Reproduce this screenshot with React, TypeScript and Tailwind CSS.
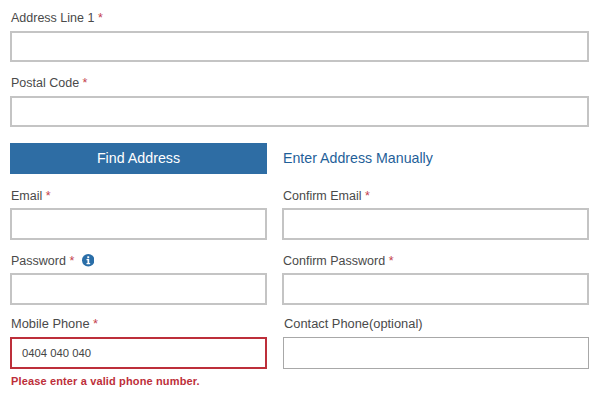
import React from "react";

const font = "font-['Liberation_Sans',Arial,sans-serif]";

function Label({ text, req = true, info = false, large = false }: { text: string; req?: boolean; info?: boolean; large?: boolean }) {
  return (
    <div className={`h-[21px] pl-[1px] flex items-center leading-[21px] text-[#4a4a4a] ${large ? "text-[12.85px]" : "text-[12.5px]"}`}>
      <span>{text}</span>
      {req && <span className="ml-[3.5px] text-[#c4404a]">*</span>}
      {info && (
        <svg className="ml-[7.5px] -mt-[2px]" width="12.5" height="12.5" viewBox="0 0 13 13">
          <circle cx="6.5" cy="6.5" r="6.5" fill="#2a6ea8" />
          <rect x="5.5" y="2.4" width="2" height="2" fill="#fff" />
          <path d="M4.7 5.3h2.8v4h1v1.3H4.7V9.3h1V6.6h-1z" fill="#fff" />
        </svg>
      )}
    </div>
  );
}

function Input({ value, error, short, thin, gap = "mt-[2px]" }: { value?: string; error?: boolean; short?: boolean; thin?: boolean; gap?: string }) {
  const border = error ? "border-2 border-[#bd2f3a]" : thin ? "border border-[#a8a8a8]" : "border-2 border-[#c4c4c4]";
  return (
    <div className={`${gap} flex items-center px-[10px] text-[11.3px] text-[#444] bg-white ${short ? "h-[31px]" : "h-[32px]"} ${border}`}>
      {value}
    </div>
  );
}

const row = "grid grid-cols-[257px_307px] gap-x-[15px]";

export default function App() {
  return (
    <div className={`w-[600px] h-[400px] overflow-hidden bg-white pl-[10px] pr-[11px] pt-[8px] ${font}`}>
      <Label text="Address Line 1" />
      <Input short />
      <div className="mt-[11px]"><Label text="Postal Code" /></div>
      <Input short />
      <div className={`mt-[16px] items-center ${row}`}>
        <div className="h-[31px] pt-[1px] flex items-center justify-center bg-[#2e6da4] text-white text-[14.25px]">Find Address</div>
        <div className="pl-[1px] text-[14.2px] text-[#1f5f99]">Enter Address Manually</div>
      </div>
      <div className={`mt-[12px] ${row}`}>
        <div><Label text="Email" /><Input gap="mt-[1px]" /></div>
        <div><Label text="Confirm Email" /><Input gap="mt-[1px]" /></div>
      </div>
      <div className={`mt-[11px] ${row}`}>
        <div><Label text="Password" info /><Input gap="mt-[1px]" /></div>
        <div><Label text="Confirm Password" /><Input gap="mt-[1px]" /></div>
      </div>
      <div className={`mt-[8px] ${row}`}>
        <div>
          <Label text="Mobile Phone" large />
          <Input value="0404 040 040" error gap="mt-[3px]" />
          <div className="mt-[4px] pl-[1px] text-[11px] leading-[16px] font-bold text-[#bd2f3a] tracking-[0.14px]">Please enter a valid phone number.</div>
        </div>
        <div className="pl-[1px]"><Label text="Contact Phone(optional)" req={false} large /><Input thin gap="mt-[3px]" /></div>
      </div>
    </div>
  );
}
